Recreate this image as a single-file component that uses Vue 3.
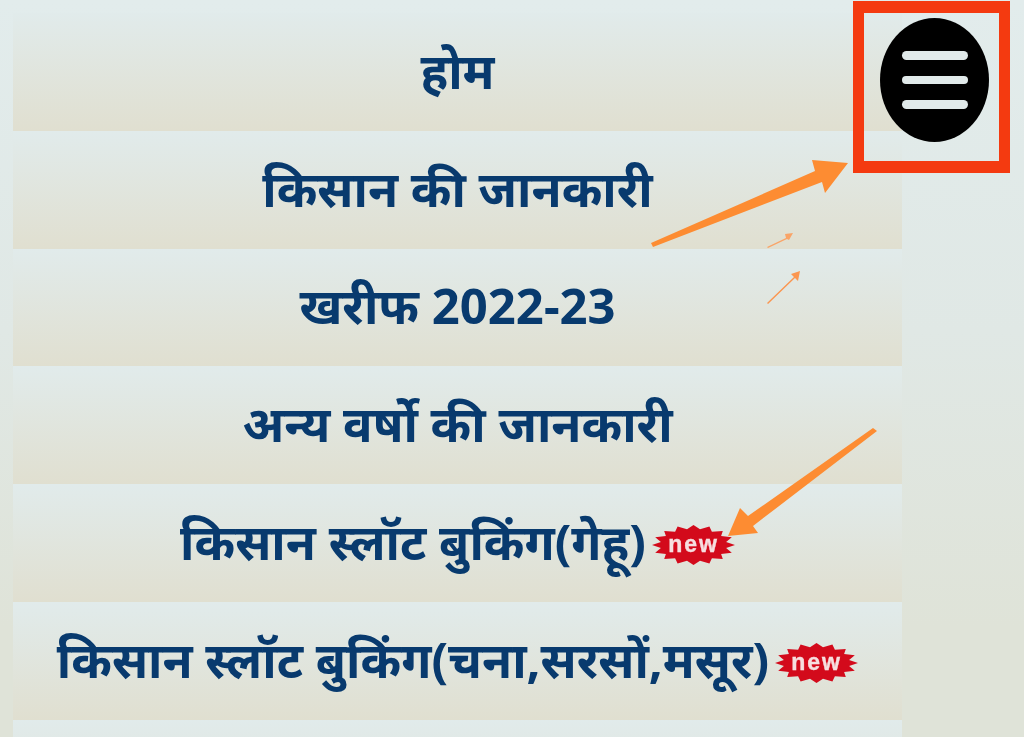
<script setup>
// site nav list, with the annotation arrows and box drawn over it
const MENU = [
	{ label: 'होम' },
	{ label: 'किसान की जानकारी' },
	{ label: 'खरीफ 2022-23' },
	{ label: 'अन्य वर्षो की जानकारी' },
	{ label: 'किसान स्लॉट बुकिंग(गेहू)', isNew: true },
	{ label: 'किसान स्लॉट बुकिंग(चना,सरसों,मसूर)', isNew: true },
	{ label: '' },
];

// jagged burst, stretched wide
const burst = [];
for (let i = 0; i < 32; i++) {
	const a = (i / 32) * Math.PI * 2;
	const r = i % 2 ? 0.8 : 1;
	burst.push(`${(41.5 + 41.5 * r * Math.cos(a)).toFixed(1)},${(20 + 20 * r * Math.sin(a)).toFixed(1)}`);
}
const burstPoints = burst.join(' ');
</script>

<template>
	<div class="page">
		<ul class="menu">
			<li v-for="(item, i) in MENU" :key="i" class="menu-item">
				<span class="label">{{ item.label }}</span>
				<svg v-if="item.isNew" class="new-badge" viewBox="0 0 83 40">
					<polygon :points="burstPoints" fill="#d30a1b" />
					<text x="41.5" y="27" text-anchor="middle" class="new-text">new</text>
				</svg>
			</li>
		</ul>

		<div class="toggle-box">
			<div class="toggle">
				<span class="bar"></span>
				<span class="bar"></span>
				<span class="bar"></span>
			</div>
		</div>

		<svg class="arrows" viewBox="0 0 1024 737">
			<polygon fill="#fd8c32" points="651,243 815,171 812,160 848,163 825,193 822,182 653,247" />
			<polygon fill="#f9a468" points="767,247 786,238 785,234 793,233 789,240 787,239 768,248" />
			<polygon fill="#fb9650" points="767,303 794,277 791,274 800,271 798,281 795,278 768,304" />
			<polygon fill="#fd8c32" points="873,428 877,431 753,526 758,533 728,536 740,508 748,516" />
		</svg>
	</div>
</template>

<style scoped>
.page {
	position: relative;
	width: 1024px;
	height: 737px;
	overflow: hidden;
	box-sizing: border-box;
	padding: 13px 0 0 13px;
	background: linear-gradient(#e2ecec 0%, #e0e8e5 45%, #dfe3d8 85%);
	font-family: "Noto Sans", "Noto Sans Devanagari", "Lato", sans-serif;
}
.menu {
	list-style: none;
	margin: 0;
	padding: 0;
	width: 889px;
}
.menu-item {
	height: 117.8px;
	display: flex;
	align-items: center;
	justify-content: center;
	gap: 6px;
	padding-bottom: 4px;
	box-sizing: border-box;
	background: linear-gradient(#e1ebeb, #e0dfd0);
}
.label {
	font-size: 49px;
	font-weight: 700;
	color: #083a6e;
	white-space: nowrap;
}
.new-badge {
	width: 83px;
	height: 40px;
	margin-top: 8px;
	filter: blur(0.5px);
}
.new-text {
	font-family: "Liberation Sans", sans-serif;
	font-size: 23px;
	font-weight: 700;
	letter-spacing: 2px;
	fill: #f6dfe0;
	stroke: #f6dfe0;
	stroke-width: 0.4px;
}
.toggle-box {
	position: absolute;
	left: 853px;
	top: 1px;
	width: 157px;
	height: 172px;
	box-sizing: border-box;
	border: solid #f43a10;
	border-width: 12px 11px;
	display: flex;
	justify-content: center;
	padding: 5px 0 0 6px;
}
.toggle {
	width: 109px;
	height: 124px;
	border-radius: 50%;
	background: #000;
	display: flex;
	flex-direction: column;
	align-items: center;
	justify-content: center;
	gap: 16px;
}
.bar {
	width: 66px;
	height: 8.5px;
	border-radius: 5px;
	background: #e1eaea;
}
.arrows {
	position: absolute;
	left: 0;
	top: 0;
	width: 1024px;
	height: 737px;
	pointer-events: none;
}
</style>
